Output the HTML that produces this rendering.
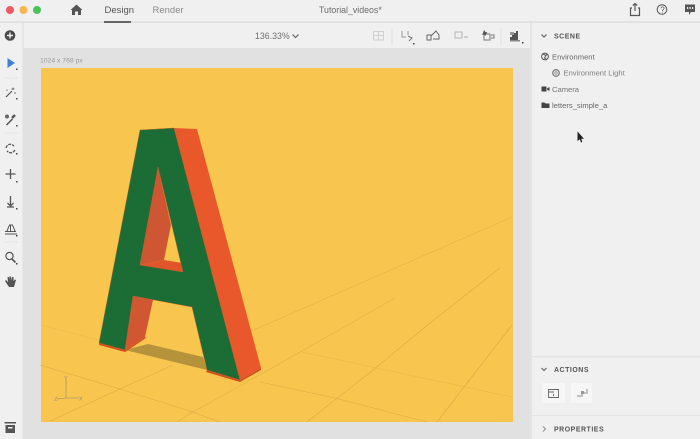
<!DOCTYPE html>
<html><head><meta charset="utf-8">
<style>
html,body{margin:0;padding:0;background:#f0f0f0;overflow:hidden}
svg{display:block;filter:blur(.35px)}
text{font-family:"Liberation Sans",sans-serif}
</style></head>
<body>
<svg width="700" height="439" viewBox="0 0 700 439" xmlns="http://www.w3.org/2000/svg">
<defs><filter id="b"><feGaussianBlur stdDeviation="0.35"/></filter></defs>
<rect width="700" height="439" fill="#f0f0f0"/>
<!-- canvas bg -->
<rect x="23" y="48" width="508" height="391" fill="#e0e1e0"/>
<rect x="41" y="68" width="472" height="354" fill="#f8c54f"/>
<!-- chrome lines -->
<rect y="21" width="700" height="2" fill="#e2e2e2"/>
<rect x="23" y="23" width="1" height="25" fill="#e4e4e4"/>
<rect x="22" y="23" width="1" height="416" fill="#e6e6e6"/>
<rect x="530" y="23" width="2" height="416" fill="#e4e4e4"/>
<rect x="532" y="356" width="168" height="1.500" fill="#e3e3e3"/>
<rect x="532" y="415" width="168" height="1" fill="#e3e3e3"/>
<rect x="104" y="21" width="27" height="2" fill="#666"/>
<!-- traffic lights -->
<circle cx="10" cy="10" r="4" fill="#ef5a60"/><circle cx="23.500" cy="10" r="4" fill="#f5b74e"/><circle cx="37" cy="10" r="4" fill="#4cc25c"/>
<!-- home -->
<path d="M70.500 10L76.500 4.500L82.500 10H81V15H78V11.500H75V15H72V10Z" fill="#555"/>
<g>
<text x="104.500" y="13" font-size="9.500" fill="#555">Design</text>
<text x="152.500" y="13" font-size="9.500" fill="#8a8a8a">Render</text>
<text x="319" y="13" font-size="8.800" fill="#6b6b6b">Tutorial_videos*</text>
<text x="255" y="39" font-size="8.800" fill="#707070">136.33%</text>
<text x="40" y="62.500" font-size="6.800" fill="#999">1024 x 768 px</text>
<text x="554" y="38.500" font-size="7" font-weight="700" letter-spacing=".5" fill="#555">SCENE</text>
<text x="552" y="59.500" font-size="7.600" fill="#666">Environment</text>
<text x="563.500" y="75.500" font-size="7.600" fill="#808080">Environment Light</text>
<text x="552" y="92" font-size="7.600" fill="#777">Camera</text>
<text x="552" y="108" font-size="7.600" fill="#666">letters_simple_a</text>
<text x="554" y="372" font-size="7" font-weight="700" letter-spacing=".5" fill="#555">ACTIONS</text>
<text x="554" y="431.500" font-size="7" font-weight="700" letter-spacing=".5" fill="#555">PROPERTIES</text>
</g>
<!-- chevrons -->
<g fill="none" stroke="#666" stroke-width="1.200">
<path d="M292.500 34.500L295.500 37.500L298.500 34.500"/>
<path d="M541.500 34.500L544 37L546.500 34.500"/>
<path d="M541.500 368L544 370.500L546.500 368"/>
<path stroke="#999" d="M543 426.500L545.500 429L543 431.500"/>
</g>
<!-- top toolbar icons -->
<g fill="none" stroke="#8a8a8a" stroke-width="1">
<path stroke="#d0d0d0" d="M373.500 31.500H383.500V40H373.500ZM373.500 35.500H383.500M378.500 31.500V40"/>
<path stroke="#e0e0e0" d="M392 28V45M501 28V45"/>
<path d="M402 31V37H406M408 31V35" stroke="#999"/>
<path d="M408 36L412 38L409 41" stroke="#777"/>
<path d="M427 35H431V40H427ZM431 36L436 31L439 35V39H433" stroke="#666"/>
<path d="M455 32H462V38H455ZM464 37H468" stroke="#b5b5b5"/>
<path d="M484 34H490V40H484ZM491 35H494V38H491" stroke="#777"/>
</g>
<path d="M484 30l1.500 2 2 .5-1.500 1.500-.5 2-1.500-1.500-2 .5 1-2z" fill="#555"/>
<path d="M510 40L518 40V31H516V33H514V35H512V37H510Z" fill="#555"/><rect x="510" y="40" width="10" height="1.500" fill="#888"/><rect x="510" y="32" width="4" height="3" fill="#999"/>
<rect x="413" y="43" width="1.500" height="1.500" fill="#444"/><rect x="522" y="42" width="1.500" height="1.500" fill="#444"/>
<!-- top right -->
<g fill="none" stroke="#555" stroke-width="1.200">
<path d="M632 8H630.500V15.500H639.500V8H638"/><path d="M635 11V3.500M632.800 5.500L635 3.500L637.200 5.500"/>
<circle cx="662" cy="9.500" r="4.800" stroke-width="1"/>
</g>
<text x="660.300" y="12.500" font-size="8" fill="#555">?</text>
<path d="M685 4.500H695V12H691L689 15V12H685Z" fill="#555"/>
<path d="M687 7h1.200v2H687zM689.500 7h1.200v2h-1.200zM692 7h1.200v2H692z" fill="#eee"/>
<!-- add -->
<circle cx="10" cy="35.500" r="5.300" fill="#4a4a4a"/><path d="M10 32.500V38.500M7 35.500H13" stroke="#f0f0f0" stroke-width="1.400"/>
<!-- left tools -->
<path d="M7.500 58L15 63L7.500 68Z" fill="#3d82d8"/>
<g fill="#444"><rect x="16" y="68.500" width="1.500" height="1.500"/><rect x="16" y="98" width="1.500" height="1.500"/><rect x="16" y="125" width="1.500" height="1.500"/><rect x="16" y="153" width="1.500" height="1.500"/><rect x="16" y="181" width="1.500" height="1.500"/><rect x="16" y="208" width="1.500" height="1.500"/><rect x="16" y="235" width="1.500" height="1.500"/><rect x="16" y="263" width="1.500" height="1.500"/></g>
<path d="M5 78H18M5 133H18M5 242H18" stroke="#e4e4e4"/>
<g fill="none" stroke="#555" stroke-width="1.200">
<path d="M6 97L12 91"/><path d="M13 87.500V90M11.500 89H14.500M7 89.500V91M15 92V94" stroke-width=".8"/>
<path d="M6.500 125L12.500 119" stroke-width="1.500"/><path d="M12 118L15 115" stroke-width="2.500"/><circle cx="7" cy="116.500" r="2" fill="#666" stroke="none"/>
<path d="M6 148C7 144 11 143 14 146M15 150C13 153 10 154 7 151" stroke-width="1.300" stroke-dasharray="3 1"/>
<path d="M10.500 169V179M5.500 174H15.500" stroke-width="1.300"/>
<path d="M10.500 196V205M7.500 203L10.500 206L13.500 203M7 207H14" stroke-width="1.300"/>
<path d="M5 231.500H16M7 231L9.500 225H12.500L15 231M10.500 225V231M5 234H17" stroke-width="1"/>
<circle cx="9.500" cy="256" r="3.600"/><path d="M12 259L15.500 262.500" stroke-width="1.600"/>
</g>
<path d="M7 284L5 281L6 280L8 282L7.500 277H9V280.500L9.500 276.500H11V280.500L12 277H13.500V281L15 279.500L16 280L14 287H9Z" fill="#555"/>
<!-- bottom-left archive -->
<path d="M4.500 422H16V423.500H4.500ZM5.500 425H15V433H5.500Z" fill="#555"/><rect x="8" y="427" width="4.500" height="1.500" fill="#eee"/>
<!-- grid -->
<g fill="none" stroke="#cf9f3c" stroke-width=".55">
<path d="M240 336L512 217" opacity=".55"/>
<path d="M177 422L193 412L272 368L395 298" opacity=".6"/>
<path d="M307 422L373 370L430 323L500 268" opacity=".75"/>
<path d="M437 422L512 325" opacity=".9"/>
<path d="M260 382L335 398L427 422" opacity=".7"/>
<path d="M302 352L512 397" opacity=".4"/>
<path d="M40 365L120 389L193 412L220 422" opacity=".75"/>
<path d="M50 421L120 389L173 365" opacity=".7"/>
<path d="M41 325L98 340" opacity=".3"/>
</g>
<g stroke="#a99a6d" stroke-width=".8" fill="none"><path d="M66 398V379M66 398H79M66 398L57 399"/></g>
<g font-size="5.500" fill="#a0946c"><text x="64" y="380">Y</text><text x="79" y="400.500">X</text><text x="54" y="401">Z</text></g>
<!-- letter A -->
<g filter="url(#b)">
<path d="M125 350L148 344L203 357L207 370Z" fill="#b5933a"/>
<path d="M174 128L197 129L261 368L240 380Z" fill="#e9592b"/>
<path d="M158 167L140 265L164 260L171 225Z" fill="#cf5631"/>
<path d="M140 265L164 260L182 263L183 272Z" fill="#e0542a"/>
<path d="M133 296L153 300L145 337L125 350Z" fill="#d15733"/>
<path d="M99 343L125 350L145 337L146 338L125 352L99 345ZM207 370L240 380L261 368L261 370L240 382L206 372Z" fill="#d4501f"/>
<path fill-rule="evenodd" d="M140 130L174 128L240 380L207 370L192 307L133 296L125 350L99 343ZM158 167L140 265L183 272Z" fill="#1f6d34" stroke="#b8602a" stroke-width=".5"/>
</g>
<!-- cursor -->
<path d="M577.500 131.500V141L579.800 139.300L581 142.500L582.300 142L581.200 138.800H584Z" fill="#222"/>
<!-- scene icons -->
<g fill="none" stroke="#555" stroke-width="1">
<circle cx="545" cy="56.500" r="3.400"/><path d="M543 54L546 55.500L544.500 58L546.500 59.500M547.500 54.500L546 55"/>
<circle cx="556" cy="73" r="3.300" stroke="#808080" stroke-width="1.300"/><circle cx="556" cy="73" r="1.200" stroke="#999"/>
</g>
<path d="M541.500 86.500H546.500V91.500H541.500ZM547 88.500L549.500 87V91L547 89.500Z" fill="#444"/>
<path d="M541.500 102.500H544.500L545.500 103.500H549.500V108H541.500Z" fill="#444"/>
<!-- actions -->
<rect x="542" y="383" width="23" height="20" fill="#f6f6f6"/><rect x="571" y="383" width="21" height="20" fill="#f6f6f6"/>
<path d="M548.500 389.500H558.500V397.500H548.500ZM548.500 392H554M553.500 394V396" fill="none" stroke="#666" stroke-width=".9"/>
<path d="M577 396H582V393H587V389" fill="none" stroke="#bbb" stroke-width="1.800"/><rect x="581" y="391" width="3" height="3" fill="#999"/>
</svg>
</body></html>
